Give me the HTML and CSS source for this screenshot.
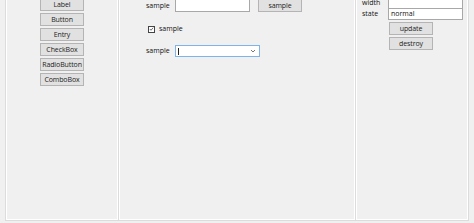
FILE: index.html
```html
<!DOCTYPE html>
<html lang="en">

<head>
    <meta charset="UTF-8">
    <meta name="viewport" content="width=device-width, initial-scale=1.0">
    <title>widgets</title>
    <link rel="stylesheet" href="styles.css">
</head>

<body>
    <div class="win">
        <div class="frame menu">
            <button class="btn">Label</button>
            <button class="btn">Button</button>
            <button class="btn">Entry</button>
            <button class="btn">CheckBox</button>
            <button class="btn">RadioButton</button>
            <button class="btn">ComboBox</button>
        </div>

        <div class="frame demo">
            <div class="row first">
                <span class="lbl">sample</span>
                <span class="entry"></span>
                <button class="btn wide">sample</button>
            </div>
            <div class="row check">
                <span class="box">
                    <svg width="6" height="6" viewBox="0 0 6 6">
                        <path d="M1 3 L2.4 4.5 L5 1.4" fill="none" stroke="#222" stroke-width="0.8" />
                    </svg>
                </span>
                <span class="lbl">sample</span>
            </div>
            <div class="row combo-row">
                <span class="lbl">sample</span>
                <span class="combo">
                    <span class="caret"></span>
                    <svg class="arrow" width="6" height="4" viewBox="0 0 6 4">
                        <path d="M1 1 L3 3 L5 1" fill="none" stroke="#555" stroke-width="0.8" />
                    </svg>
                </span>
            </div>
        </div>

        <div class="frame props">
            <div class="grid">
                <span class="lbl">width</span>
                <span class="entry top"></span>
                <span class="lbl">state</span>
                <span class="entry">normal</span>
            </div>
            <div class="actions">
                <button class="btn">update</button>
                <button class="btn">destroy</button>
            </div>
        </div>
    </div>
</body>

</html>
```

FILE: styles.css
```css
* {
    margin: 0;
    padding: 0;
    box-sizing: border-box;
}

body {
    width: 474px;
    height: 223px;
    background: #f0f0f0;
    font-family: "Open Sans", "Noto Sans", sans-serif;
    font-size: 7px;
    color: #111;
    overflow: hidden;
}

.win {
    display: flex;
    height: 221px;
    padding-left: 5px;
}

.frame {
    height: 100%;
    border: 1px solid #dcdcdc;
    border-top: 0;
    box-shadow: inset 1px 0 0 #fff, inset -1px 0 0 #fff, inset 0 -1px 0 #fff;
}

.btn {
    display: flex;
    align-items: center;
    justify-content: center;
    width: 44px;
    height: 13px;
    background: #e1e1e1;
    border: 1px solid #b4b4b4;
    font: inherit;
    letter-spacing: -0.1px;
    color: #222;
}

/* left column */
.menu {
    width: 114px;
    display: flex;
    flex-direction: column;
    align-items: center;
    gap: 2px;
    margin-top: -2px;
    height: 223px;
}

/* middle */
.demo {
    width: 237px;
    border-left: 0;
    padding-left: 27px;
}

.row {
    display: flex;
    align-items: center;
}

.lbl {
    line-height: 8px;
}

.first {
    margin-top: -1px;
}

.first .lbl {
    width: 29px;
}

.entry {
    display: block;
    width: 75px;
    height: 13px;
    background: #fff;
    border: 1px solid #a8a8a8;
    padding-left: 2px;
    line-height: 11px;
}

.first .btn {
    margin-left: 8px;
}

.check {
    margin-top: 13px;
    padding-left: 2px;
}

.box {
    display: flex;
    align-items: center;
    justify-content: center;
    width: 7px;
    height: 7px;
    border: 1px solid #444;
    background: #fff;
    margin-right: 4px;
}

.combo-row {
    margin-top: 12px;
}

.combo-row .lbl {
    width: 29px;
}

.combo {
    display: flex;
    align-items: center;
    justify-content: space-between;
    width: 85px;
    height: 12px;
    background: #fff;
    border: 1px solid #7eb4ea;
    padding: 0 3px 0 2px;
}

.caret {
    width: 1px;
    height: 7px;
    background: #222;
}

/* right column */
.props {
    width: 113px;
    border-left: 0;
    padding-left: 6px;
}

.grid {
    display: grid;
    grid-template-columns: 26px 75px;
    grid-auto-rows: 12px;
    margin-top: -4px;
}

.grid .lbl {
    line-height: 12px;
}

.grid .lbl:first-child {
    line-height: 14px;
}

.grid .entry {
    height: 12px;
    line-height: 10px;
}

.grid .entry.top {
    border-bottom: 0;
}

.actions {
    display: flex;
    flex-direction: column;
    gap: 2px;
    margin: 2px 0 0 27px;
}
```
